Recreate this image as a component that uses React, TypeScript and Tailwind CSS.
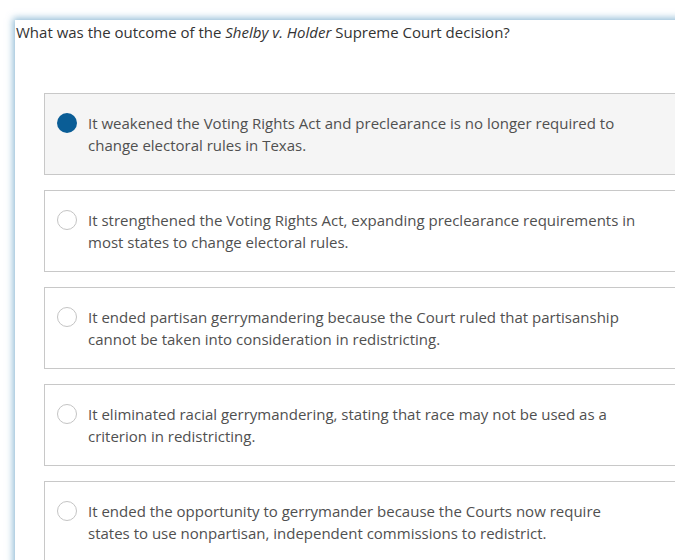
import React from 'react';

const answers = [
  {
    lines: ['It weakened the Voting Rights Act and preclearance is no longer required to', 'change electoral rules in Texas.'],
    selected: true,
  },
  {
    lines: ['It strengthened the Voting Rights Act, expanding preclearance requirements in', 'most states to change electoral rules.'],
    selected: false,
  },
  {
    lines: ['It ended partisan gerrymandering because the Court ruled that partisanship', 'cannot be taken into consideration in redistricting.'],
    selected: false,
  },
  {
    lines: ['It eliminated racial gerrymandering, stating that race may not be used as a', 'criterion in redistricting.'],
    selected: false,
  },
  {
    lines: ['It ended the opportunity to gerrymander because the Courts now require', 'states to use nonpartisan, independent commissions to redistrict.'],
    selected: false,
  },
];

const Radio: React.FC<{ checked: boolean }> = ({ checked }) =>
  checked ? (
    <span className="mt-[1px] w-[20px] h-[20px] shrink-0 rounded-full bg-[#0a5d96]" />
  ) : (
    <span className="mt-[1px] w-[20px] h-[20px] shrink-0 rounded-full border border-[#c4c4c4] bg-white" />
  );

export default function App() {
  return (
    <div
      className="w-[675px] h-[560px] overflow-hidden bg-white pt-[20px] pl-[15px]"
      style={{ fontFamily: '"Open Sans", "Liberation Sans", sans-serif' }}
    >
      <div className="w-[720px] min-h-[600px] bg-white shadow-[0_0_7px_2px_rgba(110,165,200,0.75)]">
        {/* Question */}
        <p className="pl-[1px] pt-[1px] text-[15px] leading-[22px] text-[#333333]">
          What was the outcome of the <i>Shelby v. Holder</i> Supreme Court decision?
        </p>

        {/* Answers */}
        <div className="mt-[50px] ml-[29px] flex flex-col gap-[15px]">
          {answers.map((a, i) => (
            <label
              key={i}
              className={`flex items-start gap-[11px] border border-[#c8c8c8] pl-[12px] pt-[18px] pb-[18px] ${
                a.selected ? 'bg-[#f5f5f5]' : 'bg-white'
              }`}
            >
              <Radio checked={a.selected} />
              <span className="text-[15px] leading-[22px] text-[#505050] whitespace-nowrap">
                {a.lines[0]}
                <br />
                {a.lines[1]}
              </span>
            </label>
          ))}
        </div>
      </div>
    </div>
  );
}
